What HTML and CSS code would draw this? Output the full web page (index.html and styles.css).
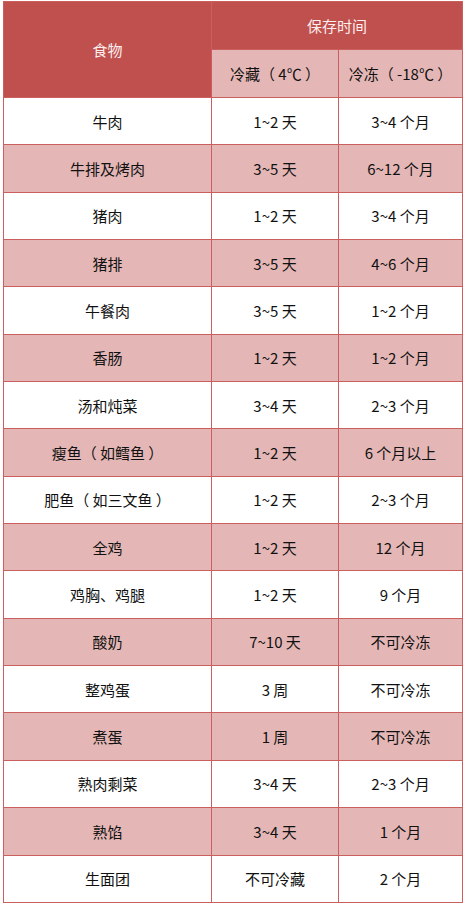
FILE: index.html
```html
<!DOCTYPE html>
<html lang="zh">
<head>
<meta charset="utf-8">
<link rel="stylesheet" href="styles.css">
</head>
<body>
<table class="storage">
  <colgroup>
    <col class="c-food">
    <col class="c-fridge">
    <col class="c-freeze">
  </colgroup>
  <thead>
    <tr class="h1">
      <th rowspan="2" class="food-head">食物</th>
      <th colspan="2" class="time-head">保存时间</th>
    </tr>
    <tr class="h2">
      <th class="sub">冷藏（ 4℃ ）</th>
      <th class="sub">冷冻（ -18℃ ）</th>
    </tr>
  </thead>
  <tbody>
    <tr><td>牛肉</td><td>1~2 天</td><td>3~4 个月</td></tr>
    <tr class="alt"><td>牛排及烤肉</td><td>3~5 天</td><td>6~12 个月</td></tr>
    <tr><td>猪肉</td><td>1~2 天</td><td>3~4 个月</td></tr>
    <tr class="alt"><td>猪排</td><td>3~5 天</td><td>4~6 个月</td></tr>
    <tr><td>午餐肉</td><td>3~5 天</td><td>1~2 个月</td></tr>
    <tr class="alt"><td>香肠</td><td>1~2 天</td><td>1~2 个月</td></tr>
    <tr><td>汤和炖菜</td><td>3~4 天</td><td>2~3 个月</td></tr>
    <tr class="alt"><td>瘦鱼（ 如鳕鱼 ）</td><td>1~2 天</td><td>6 个月以上</td></tr>
    <tr><td>肥鱼（ 如三文鱼 ）</td><td>1~2 天</td><td>2~3 个月</td></tr>
    <tr class="alt"><td>全鸡</td><td>1~2 天</td><td>12 个月</td></tr>
    <tr><td>鸡胸、鸡腿</td><td>1~2 天</td><td>9 个月</td></tr>
    <tr class="alt"><td>酸奶</td><td>7~10 天</td><td>不可冷冻</td></tr>
    <tr><td>整鸡蛋</td><td>3 周</td><td>不可冷冻</td></tr>
    <tr class="alt"><td>煮蛋</td><td>1 周</td><td>不可冷冻</td></tr>
    <tr><td>熟肉剩菜</td><td>3~4 天</td><td>2~3 个月</td></tr>
    <tr class="alt"><td>熟馅</td><td>3~4 天</td><td>1 个月</td></tr>
    <tr><td>生面团</td><td>不可冷藏</td><td>2 个月</td></tr>
  </tbody>
</table>
</body>
</html>
```

FILE: styles.css
```css
html, body {
  margin: 0;
  padding: 0;
  background: #ffffff;
}

body {
  padding: 1px 0 0 3px;
  font-family: "Noto Sans CJK SC", "Noto Sans", sans-serif;
  font-size: 15px;
  color: #111111;
}

.storage {
  border-collapse: collapse;
  table-layout: fixed;
  width: 459px;
}

.c-food { width: 208px; }
.c-fridge { width: 127px; }
.c-freeze { width: 124px; }

.storage th,
.storage td {
  padding: 0;
  text-align: center;
  vertical-align: middle;
  font-weight: normal;
  border: 1px solid #c9605d;
  text-spacing-trim: space-all;
}

.storage tbody tr {
  height: 47.35px;
}

.storage tbody tr.alt td {
  background: #e4b7b6;
}

.h1 { height: 48px; }
.h2 { height: 48px; }

.food-head,
.time-head {
  background: #c0504d;
  color: #fbeeee;
}

.food-head {
  border-right-color: #e8b4b3;
}

.time-head {
  border-bottom: 2px solid #ffffff;
}

.sub {
  background: #e4b7b6;
  color: #111111;
}
```
